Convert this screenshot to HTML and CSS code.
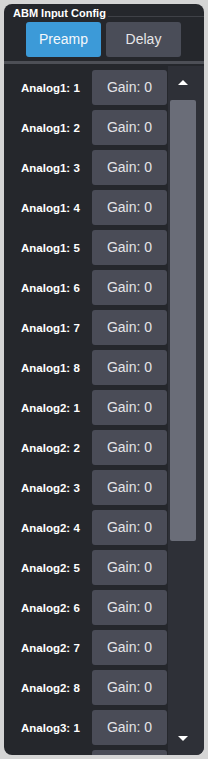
FILE: index.html
```html
<!DOCTYPE html>
<html>
<head>
<meta charset="utf-8">
<link rel="stylesheet" href="styles.css">
</head>
<body>
<div class="panel">
  <div class="title"><span class="title-text">ABM Input Config</span><span class="title-line"></span></div>
  <div class="tabs">
    <div class="tab active">Preamp</div>
    <div class="tab">Delay</div>
  </div>
  <div class="sep"></div>
  <div class="body">
    <div class="list">
      <div class="row"><div class="label">Analog1: 1</div><div class="gain">Gain: 0</div></div>
      <div class="row"><div class="label">Analog1: 2</div><div class="gain">Gain: 0</div></div>
      <div class="row"><div class="label">Analog1: 3</div><div class="gain">Gain: 0</div></div>
      <div class="row"><div class="label">Analog1: 4</div><div class="gain">Gain: 0</div></div>
      <div class="row"><div class="label">Analog1: 5</div><div class="gain">Gain: 0</div></div>
      <div class="row"><div class="label">Analog1: 6</div><div class="gain">Gain: 0</div></div>
      <div class="row"><div class="label">Analog1: 7</div><div class="gain">Gain: 0</div></div>
      <div class="row"><div class="label">Analog1: 8</div><div class="gain">Gain: 0</div></div>
      <div class="row"><div class="label">Analog2: 1</div><div class="gain">Gain: 0</div></div>
      <div class="row"><div class="label">Analog2: 2</div><div class="gain">Gain: 0</div></div>
      <div class="row"><div class="label">Analog2: 3</div><div class="gain">Gain: 0</div></div>
      <div class="row"><div class="label">Analog2: 4</div><div class="gain">Gain: 0</div></div>
      <div class="row"><div class="label">Analog2: 5</div><div class="gain">Gain: 0</div></div>
      <div class="row"><div class="label">Analog2: 6</div><div class="gain">Gain: 0</div></div>
      <div class="row"><div class="label">Analog2: 7</div><div class="gain">Gain: 0</div></div>
      <div class="row"><div class="label">Analog2: 8</div><div class="gain">Gain: 0</div></div>
      <div class="row"><div class="label">Analog3: 1</div><div class="gain">Gain: 0</div></div>
      <div class="row"><div class="label"></div><div class="gain"></div></div>
    </div>
    <div class="scrollbar">
      <div class="sb-col">
        <div class="arrow-box top"><span class="arrow up"></span></div>
        <div class="thumb"></div>
        <div class="sb-spacer"></div>
        <div class="arrow-box bottom"><span class="arrow down"></span></div>
      </div>
    </div>
  </div>
</div>
</body>
</html>
```
FILE: styles.css
```css
html, body {
  margin: 0;
  padding: 0;
}
body {
  background: #d5d5d5;
  width: 208px;
  height: 759px;
  overflow: hidden;
  font-family: "Liberation Sans", Arial, sans-serif;
}
.panel {
  margin: 4px;
  height: 751px;
  width: 200px;
  background: #25272c;
  border-radius: 8px;
  overflow: hidden;
  display: flex;
  flex-direction: column;
}
.title {
  height: 18px;
  display: flex;
  align-items: flex-start;
  flex-shrink: 0;
}
.title-text {
  padding-left: 9px;
  padding-top: 3px;
  padding-right: 2px;
  font-size: 11px;
  line-height: 13px;
  font-weight: bold;
  color: #ffffff;
}
.title-line {
  flex: 1;
  height: 1px;
  margin-top: 12px;
  background: #3f4147;
}
.tabs {
  display: flex;
  justify-content: center;
  gap: 5px;
  height: 35px;
  margin-bottom: 4px;
  flex-shrink: 0;
  padding-right: 1px;
}
.tab {
  width: 75px;
  height: 35px;
  border-radius: 3px;
  background: #4a4d58;
  color: #e6e6e8;
  font-size: 14px;
  line-height: 35px;
  text-align: center;
}
.tab.active {
  background: #3c9ad8;
  color: #f4f8fb;
}
.sep {
  height: 3px;
  background: #4d4f56;
  flex-shrink: 0;
}
.body {
  flex: 1;
  display: flex;
  min-height: 0;
}
.list {
  width: 164px;
  padding-top: 6px;
  display: flex;
  flex-direction: column;
  gap: 5px;
  overflow: hidden;
}
.row {
  display: flex;
  align-items: center;
  height: 35px;
  flex-shrink: 0;
}
.label {
  width: 71px;
  padding-left: 17px;
  font-size: 11.5px;
  font-weight: bold;
  color: #ffffff;
}
.gain {
  width: 75px;
  height: 35px;
  border-radius: 3px;
  background: #4a4c57;
  color: #e4e4e8;
  font-size: 14px;
  line-height: 35px;
  text-align: center;
}
.scrollbar {
  flex: 1;
  background: #2e3037;
  margin-top: 2px;
  display: flex;
}
.sb-col {
  width: 26px;
  margin-left: 2px;
  display: flex;
  flex-direction: column;
}
.arrow-box {
  display: flex;
  justify-content: center;
  flex-shrink: 0;
}
.arrow-box.top {
  height: 34px;
  padding-top: 14px;
  box-sizing: border-box;
}
.arrow-box.bottom {
  height: 19px;
}
.arrow {
  display: block;
  width: 0;
  height: 0;
  border-left: 5px solid transparent;
  border-right: 5px solid transparent;
}
.arrow.up {
  border-bottom: 5px solid #ffffff;
}
.arrow.down {
  border-top: 5px solid #ffffff;
}
.thumb {
  height: 441px;
  background: #6a6d78;
  border-radius: 2px;
  flex-shrink: 0;
}
.sb-spacer {
  flex: 1;
}
```
